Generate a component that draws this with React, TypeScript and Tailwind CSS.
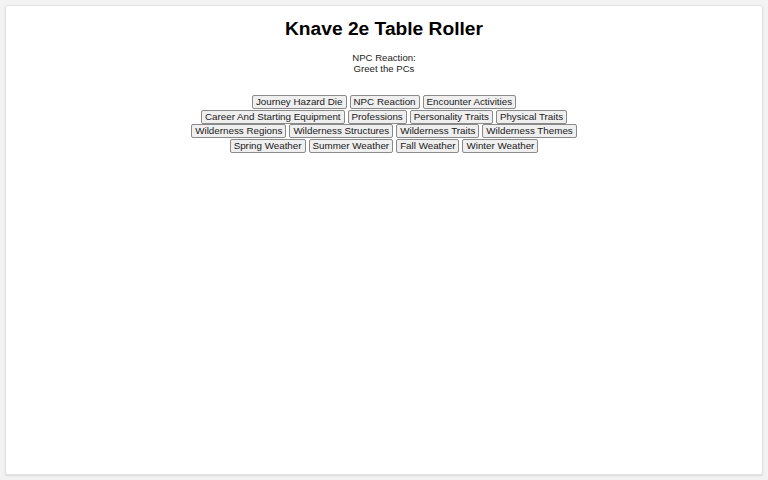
const TABLES = [
  'Journey Hazard Die',
  'NPC Reaction',
  'Encounter Activities',
  'Career And Starting Equipment',
  'Professions',
  'Personality Traits',
  'Physical Traits',
  'Wilderness Regions',
  'Wilderness Structures',
  'Wilderness Traits',
  'Wilderness Themes',
  'Spring Weather',
  'Summer Weather',
  'Fall Weather',
  'Winter Weather',
];

export default function App() {
  return (
    <div className="h-[480px] w-[768px] bg-[#f3f3f3] p-[5px] font-['Liberation_Sans',Arial,sans-serif] text-black">
      <div className="h-[470px] rounded-[2px] border border-[#e2e2e2] bg-white pt-[11px] shadow-[0_1px_2px_rgba(0,0,0,0.12)]">
        <h1 className="text-center text-[19.2px] font-bold leading-[24px]">Knave 2e Table Roller</h1>
        <div className="mt-[11px] text-center text-[9.6px] leading-[11px] text-[#222]">
          <div>NPC Reaction:</div>
          <div>Greet the PCs</div>
        </div>
        <div className="mx-auto mt-[21px] flex w-[392px] flex-wrap justify-center gap-x-[3px] gap-y-[0.5px]">
          {TABLES.map((t) => (
            <button
              key={t}
              className="h-[14px] rounded-[2px] border border-[#8a8a8a] bg-[#efefef] px-[3px] text-[9.8px] leading-[12px] text-[#1a1a1a]"
            >
              {t}
            </button>
          ))}
        </div>
      </div>
    </div>
  );
}
